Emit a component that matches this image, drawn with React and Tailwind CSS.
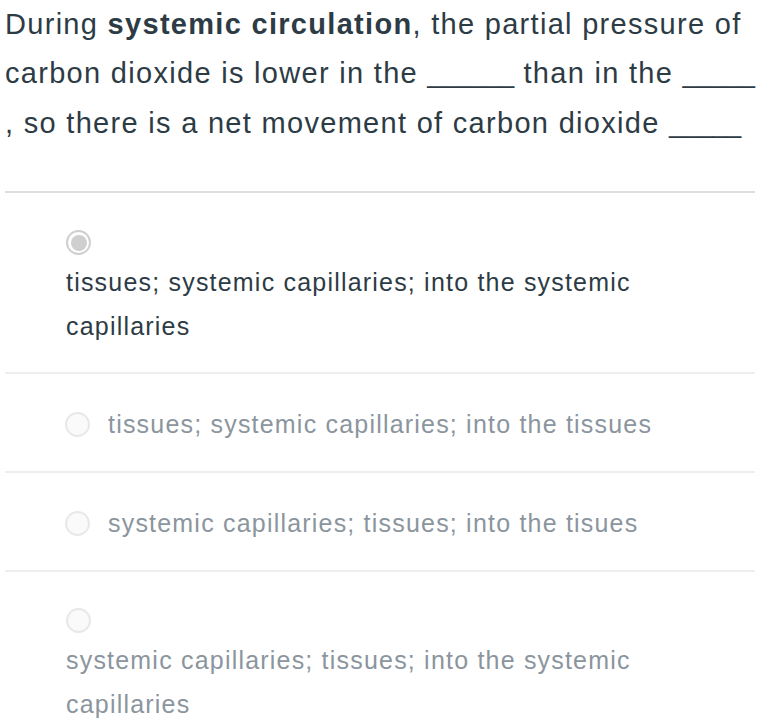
import React from "react";

function Radio({ selected }) {
  if (selected) {
    return (
      <span className="inline-flex h-[25px] w-[25px] shrink-0 items-center justify-center rounded-full border-2 border-[#cfcfcf] bg-white">
        <span className="h-[16px] w-[16px] rounded-full bg-[#cfcfcf]" />
      </span>
    );
  }
  return <span className="inline-block h-[25px] w-[25px] shrink-0 rounded-full border-2 border-[#e8e8e8] bg-[#fafafa]" />;
}

function Blank({ children }) {
  return <span className="text-[26px] tracking-normal">{children}</span>;
}

export default function App() {
  const font = { fontFamily: '"Liberation Sans", Arial, sans-serif' };
  return (
    <div className="min-h-[725px] bg-white pl-[5px] pr-[25px]" style={font}>
      <div className="mr-[-10px] text-[29px] leading-[49px] tracking-[1.3px] text-[#2d3b45]">
        During <b>systemic circulation</b>, the partial pressure of carbon dioxide is lower in the <Blank>______</Blank> than in the <Blank>_____</Blank> , so there is a net movement of carbon dioxide <Blank>_____</Blank>
      </div>
      <div className="mt-[42px] h-[2px] bg-[#dedede]" />

      <div className="pl-[61px] pt-[27px] pb-[24px] text-[25px] leading-[44px] tracking-[1.2px] text-[#2d3b45]">
        <div className="flex h-[40px] items-start pt-[10px]">
          <Radio selected />
        </div>
        <div>tissues; systemic capillaries; into the systemic capillaries</div>
      </div>
      <div className="h-[2px] bg-[#eeeeee]" />

      <div className="flex items-center gap-[18px] pl-[60px] pt-[28px] pb-[25px] text-[25px] leading-[44px] tracking-[1.2px] text-[#8b959e]">
        <Radio />
        <span>tissues; systemic capillaries; into the tissues</span>
      </div>
      <div className="h-[2px] bg-[#eeeeee]" />

      <div className="flex items-center gap-[18px] pl-[60px] pt-[28px] pb-[25px] text-[25px] leading-[44px] tracking-[1.2px] text-[#8b959e]">
        <Radio />
        <span>systemic capillaries; tissues; into the tisues</span>
      </div>
      <div className="h-[2px] bg-[#eeeeee]" />

      <div className="pl-[61px] pt-[26px] pb-[24px] text-[25px] leading-[44px] tracking-[1.2px] text-[#8b959e]">
        <div className="flex h-[40px] items-start pt-[10px]">
          <Radio />
        </div>
        <div>systemic capillaries; tissues; into the systemic capillaries</div>
      </div>
    </div>
  );
}
